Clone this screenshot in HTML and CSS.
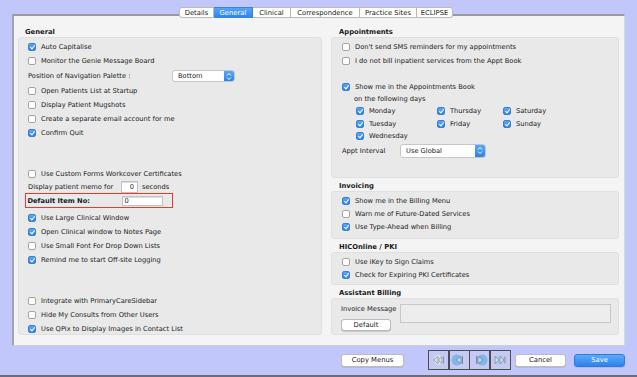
FILE: index.html
```html
<!DOCTYPE html>
<html>
<head>
<meta charset="utf-8">
<link rel="stylesheet" href="styles.css">
</head>
<body>
<div class="screen">
  <div class="window">
    <div class="tabs">
      <div class="tab t-details">Details</div>
      <div class="tab t-general sel">General</div>
      <div class="tab t-clinical">Clinical</div>
      <div class="tab t-corr">Correspondence</div>
      <div class="tab t-sites">Practice Sites</div>
      <div class="tab t-eclipse">ECLIPSE</div>
    </div>
    <div class="columns">
      <div class="col col-left">
        <div class="hdr">General</div>
        <div class="box box-general">
          <div class="row"><span class="cb on"></span>Auto Capitalise</div>
          <div class="row"><span class="cb"></span>Monitor the Genie Message Board</div>
          <div class="row row-select">
            <span class="lbl-pos">Position of Navigation Palette :</span>
            <div class="select sel-bottom"><span class="sel-text">Bottom</span><span class="sel-arrow"><svg width="6" height="9" viewBox="0 0 6 9"><path d="M1 3.5 L3 1.5 L5 3.5 M1 5.5 L3 7.5 L5 5.5" fill="none" stroke="#fff" stroke-width="1"/></svg></span></div>
          </div>
          <div class="row"><span class="cb"></span>Open Patients List at Startup</div>
          <div class="row"><span class="cb"></span>Display Patient Mugshots</div>
          <div class="row"><span class="cb"></span>Create a separate email account for me</div>
          <div class="row"><span class="cb on"></span>Confirm Quit</div>
          <div class="spacer"></div>
          <div class="row"><span class="cb"></span>Use Custom Forms Workcover Certificates</div>
          <div class="row row-memo">
            <span class="lbl-memo">Display patient memo for</span>
            <span class="field field-memo">0</span>
            <span class="lbl-sec">seconds</span>
          </div>
          <div class="highlight">
            <span class="lbl-item">Default Item No:</span>
            <span class="field field-item">0</span>
          </div>
          <div class="row"><span class="cb on"></span>Use Large Clinical Window</div>
          <div class="row"><span class="cb on"></span>Open Clinical window to Notes Page</div>
          <div class="row"><span class="cb"></span>Use Small Font For Drop Down Lists</div>
          <div class="row"><span class="cb on"></span>Remind me to start Off-site Logging</div>
          <div class="spacer"></div>
          <div class="row"><span class="cb"></span>Integrate with PrimaryCareSidebar</div>
          <div class="row"><span class="cb"></span>Hide My Consults from Other Users</div>
          <div class="row"><span class="cb on"></span>Use QPix to Display Images in Contact List</div>
        </div>
      </div>
      <div class="col col-right">
        <div class="hdr">Appointments</div>
        <div class="box box-appt">
          <div class="row"><span class="cb"></span>Don't send SMS reminders for my appointments</div>
          <div class="row"><span class="cb"></span>I do not bill inpatient services from the Appt Book</div>
          <div class="spacer-s"></div>
          <div class="row"><span class="cb on"></span>Show me in the Appointments Book</div>
          <div class="row-sub">on the following days</div>
          <div class="days">
            <div class="day"><span class="cb on"></span>Monday</div>
            <div class="day"><span class="cb on"></span>Thursday</div>
            <div class="day"><span class="cb on"></span>Saturday</div>
            <div class="day"><span class="cb on"></span>Tuesday</div>
            <div class="day"><span class="cb on"></span>Friday</div>
            <div class="day"><span class="cb on"></span>Sunday</div>
            <div class="day"><span class="cb on"></span>Wednesday</div>
          </div>
          <div class="row-interval">
            <span class="lbl-interval">Appt Interval</span>
            <div class="select sel-global"><span class="sel-text">Use Global</span><span class="sel-arrow"><svg width="6" height="9" viewBox="0 0 6 9"><path d="M1 3.5 L3 1.5 L5 3.5 M1 5.5 L3 7.5 L5 5.5" fill="none" stroke="#fff" stroke-width="1"/></svg></span></div>
          </div>
        </div>
        <div class="hdr hdr-gap">Invoicing</div>
        <div class="box box-inv">
          <div class="row r13"><span class="cb on"></span>Show me in the Billing Menu</div>
          <div class="row r13"><span class="cb"></span>Warn me of Future-Dated Services</div>
          <div class="row r13"><span class="cb on"></span>Use Type-Ahead when Billing</div>
        </div>
        <div class="hdr hdr-gap">HICOnline / PKI</div>
        <div class="box box-pki">
          <div class="row r13"><span class="cb"></span>Use iKey to Sign Claims</div>
          <div class="row r13"><span class="cb on"></span>Check for Expiring PKI Certificates</div>
        </div>
        <div class="hdr hdr-gap">Assistant Billing</div>
        <div class="box box-asst">
          <div class="asst-left">
            <div class="lbl-invoice">Invoice Message</div>
            <div class="btn btn-default">Default</div>
          </div>
          <div class="textarea"></div>
        </div>
      </div>
    </div>
  </div>
  <div class="footer">
    <div class="btn btn-copy">Copy Menus</div>
    <div class="nav">
      <div class="navbtn"><svg width="18" height="16" viewBox="0 0 18 16"><ellipse cx="9" cy="8" rx="5" ry="5" fill="#d3e3f3"/><path d="M3.5 8 L8 4.5 L8 11.5 Z" fill="#dde2ea" stroke="#8a93a0" stroke-width="0.8"/><path d="M8 8 L12 4.5 L12 11.5 Z" fill="#dde2ea" stroke="#8a93a0" stroke-width="0.8"/><path d="M13.5 4.5 V11.5" stroke="#8a93a0" stroke-width="1"/></svg></div>
      <div class="navbtn"><svg width="18" height="16" viewBox="0 0 18 16"><ellipse cx="7" cy="8" rx="5.5" ry="5.5" fill="#7db6ea"/><path d="M6 8 L11 4.5 L11 11.5 Z" fill="#c8d6ea" stroke="#7a8aa0" stroke-width="0.8"/><path d="M12.5 4 V12" stroke="#7a8aa0" stroke-width="1"/></svg></div>
      <div class="navbtn"><svg width="18" height="16" viewBox="0 0 18 16"><ellipse cx="11" cy="8" rx="5.5" ry="5.5" fill="#7db6ea"/><path d="M5.5 4 V12" stroke="#7a8aa0" stroke-width="1"/><path d="M12 8 L7 4.5 L7 11.5 Z" fill="#c8d6ea" stroke="#7a8aa0" stroke-width="0.8"/></svg></div>
      <div class="navbtn"><svg width="18" height="16" viewBox="0 0 18 16"><ellipse cx="8" cy="8" rx="5" ry="5" fill="#a9cbee"/><path d="M4 4.5 L8 8 L4 11.5 Z" fill="#dde2ea" stroke="#7a8aa0" stroke-width="0.8"/><path d="M9 4.5 L13 8 L9 11.5 Z" fill="#dde2ea" stroke="#7a8aa0" stroke-width="0.8"/><path d="M14 4.5 V11.5" stroke="#7a8aa0" stroke-width="1"/></svg></div>
    </div>
    <div class="btn btn-cancel">Cancel</div>
    <div class="btn btn-save">Save</div>
  </div>
</div>
</body>
</html>
```

FILE: styles.css
```css
* { box-sizing: border-box; }
html, body { margin: 0; padding: 0; }
body {
  width: 637px;
  height: 377px;
  overflow: hidden;
  font-family: "DejaVu Sans", "Liberation Sans", sans-serif;
  font-size: 6.7px;
  color: #1a1a1a;
}
.screen {
  width: 637px;
  height: 377px;
  background: #c1c6fb;
  border-bottom: 2px solid #6d6d74;
  display: flex;
  flex-direction: column;
}
.window {
  margin: 14px 0 0 12px;
  width: 613px;
  height: 332px;
  background: #f4f4f4;
  border-top: 2px solid #9a9a9e;
  border-left: 2px solid #a3a3a8;
  border-right: 1px solid #d8d8dc;
  border-bottom: 1px solid #cfcfd6;
  display: flex;
  flex-direction: column;
}
.tabs {
  display: flex;
  margin: -9px 0 0 165px;
  height: 11px;
}
.tab {
  height: 11px;
  line-height: 10px;
  text-align: center;
  background: #fff;
  border: 1px solid #b9b9be;
  border-left: none;
  color: #222;
  font-size: 6.8px;
}
.tab.t-details { width: 35px; border-left: 1px solid #b9b9be; border-radius: 3px 0 0 3px; }
.tab.t-general { width: 39px; }
.tab.t-clinical { width: 38px; }
.tab.t-corr { width: 69px; }
.tab.t-sites { width: 57px; }
.tab.t-eclipse { width: 36px; border-radius: 0 3px 3px 0; }
.tab.sel {
  background: linear-gradient(#58a6f6, #2f86ee);
  border-color: #3b82d8;
  color: #fff;
}
.columns {
  display: flex;
  margin: 10px 0 0 4px;
  gap: 9px;
}
.col { display: flex; flex-direction: column; }
.col-left { width: 304px; }
.col-right { width: 288px; }
.hdr {
  height: 9px;
  line-height: 9px;
  font-weight: bold;
  padding-left: 7px;
  font-size: 6.8px;
}
.col-right .hdr { padding-left: 8px; }
.hdr-gap { margin-top: 4px; }
.box {
  background: #e9e9e9;
  border: 1px solid #e0e0e0;
  border-radius: 3px;
}
.box-general { height: 298px; padding: 2px 0 0 9px; }
.box-appt { height: 141px; padding: 2px 0 0 10px; }
.box-inv { height: 48px; padding: 2.5px 0 0 10px; }
.box-pki { height: 33px; padding: 2px 0 0 10px; }
.box-asst { height: 37px; padding: 5px 0 0 9px; display: flex; }
.row {
  height: 14px;
  display: flex;
  align-items: center;
  white-space: nowrap;
}
.row.r13 { height: 13px; }
.cb {
  width: 8px;
  height: 8px;
  border: 1px solid #a5a5a5;
  border-radius: 2px;
  background: #fff;
  margin-right: 5px;
  flex: none;
  position: relative;
}
.cb.on {
  background: linear-gradient(#5aa7f7, #2d83ee);
  border-color: #3a7fd4;
}
.cb.on::after {
  content: "";
  position: absolute;
  left: 2px;
  top: 0px;
  width: 2px;
  height: 4px;
  border-right: 1.2px solid #fff;
  border-bottom: 1.2px solid #fff;
  transform: rotate(40deg);
}
.spacer { height: 27px; }
.spacer-s { height: 12px; }
.row-select { height: 16px; }
.lbl-pos { width: 144px; }
.select {
  height: 12px;
  background: #fff;
  border: 1px solid #c6c6c6;
  border-radius: 3px;
  display: flex;
  align-items: stretch;
  overflow: hidden;
}
.sel-bottom { width: 63px; }
.sel-global { width: 86px; height: 14px; }
.sel-text { flex: 1; padding-left: 5px; display: flex; align-items: center; }
.sel-arrow {
  width: 10px;
  background: linear-gradient(#5aa7f7, #2d83ee);
  display: flex;
  align-items: center;
  justify-content: center;
}
.row-memo { height: 12px; }
.lbl-memo { width: 93px; }
.field {
  background: #fff;
  border: 1px solid #c2c2c2;
  box-shadow: inset 0 1px 0 #ddd;
  display: flex;
  align-items: center;
}
.field-memo { width: 17px; height: 12px; justify-content: flex-end; padding-right: 3px; }
.lbl-sec { margin-left: 4px; }
.highlight {
  margin-left: -3px;
  width: 148px;
  height: 15px;
  border: 1.5px solid #e63a2c;
  display: flex;
  align-items: center;
  padding-left: 1.5px;
  margin-bottom: 3px;
}
.lbl-item { font-weight: bold; width: 94px; }
.field-item { width: 41px; height: 10px; padding-left: 2px; }
.row-sub { height: 10px; line-height: 10px; padding-left: 12px; }
.days {
  display: grid;
  grid-template-columns: 81px 66px 60px;
  grid-auto-rows: 12.5px;
  padding-left: 14px;
  margin-top: 1px;
}
.day { display: flex; align-items: center; }
.row-interval {
  display: flex;
  align-items: center;
  height: 14px;
  margin-top: 1px;
}
.lbl-interval { width: 58px; }
.asst-left { width: 59px; display: flex; flex-direction: column; }
.lbl-invoice { height: 10px; line-height: 10px; }
.btn {
  background: #fff;
  border: 1px solid #bcbcbc;
  border-radius: 3px;
  display: flex;
  align-items: center;
  justify-content: center;
  font-size: 6.8px;
  color: #222;
  box-shadow: 0 0.5px 0 #aaa;
}
.btn-default { width: 50px; height: 12px; margin-top: 5px; }
.textarea {
  width: 211px;
  height: 19px;
  background: #ededed;
  border: 1px solid #c8c8c8;
}
.footer {
  flex: 1;
  display: flex;
  align-items: center;
  padding-left: 341px;
  padding-bottom: 1px;
}
.btn-copy { width: 63px; height: 13px; margin-right: 24px; }
.nav { display: flex; width: 83px; height: 20px; margin-right: 4px; }
.navbtn {
  width: 21px;
  height: 20px;
  border: 1.5px solid #4d4d55;
  background: #c6caf2;
  display: flex;
  align-items: center;
  justify-content: center;
  margin-right: -0.5px;
}
.btn-cancel { width: 51px; height: 13px; margin-right: 8px; }
.btn-save {
  width: 51px;
  height: 13px;
  background: linear-gradient(#5eaaf8, #2b82ef);
  border-color: #2f7bdc;
  color: #fff;
}
```
